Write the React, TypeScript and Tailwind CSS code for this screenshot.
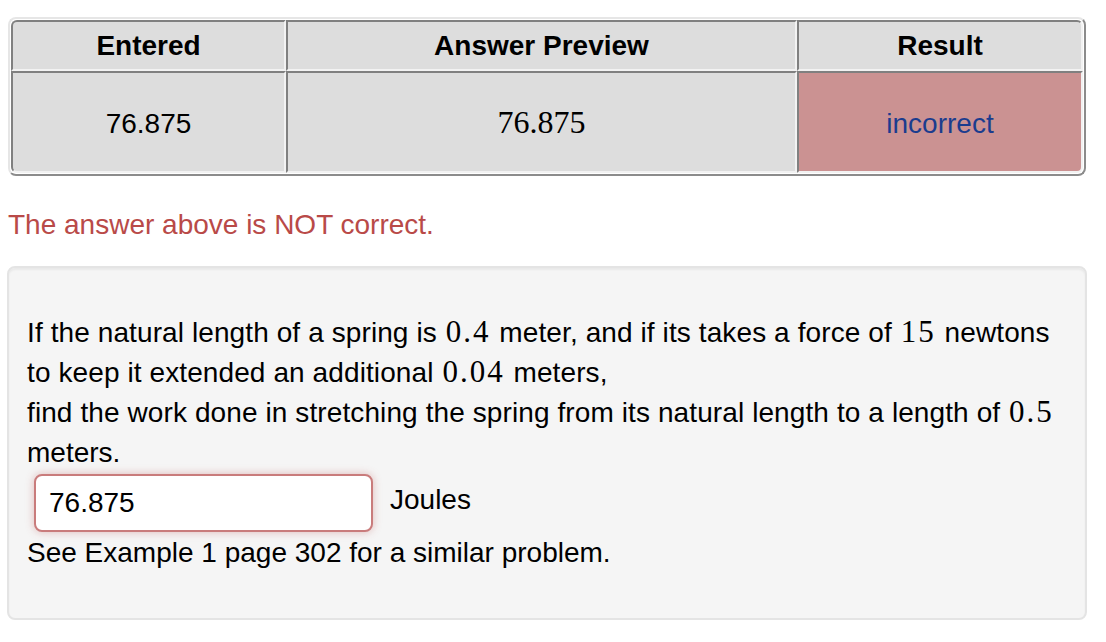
const sans = { fontFamily: '"Liberation Sans", Arial, Helvetica, sans-serif' }

function M({ children }: { children: string }) {
  return (
    <span className="mx-px font-['Liberation_Serif',serif] text-[31px] leading-none tracking-[2px]">{children}</span>
  )
}

const cellBase =
  'flex items-center justify-center border-2 border-t-[#808080] border-l-[#808080] border-b-[#f2f2f2] border-r-[#f2f2f2]'

export default function App() {
  return (
    <div className="min-h-[642px] w-[1106px] bg-white text-black" style={sans}>
      {/* Results table */}
      <div className="pt-[17px] pl-[8px]">
        <div className="w-[1078px] rounded-[8px] border-2 border-t-[#e6e6e6] border-l-[#e6e6e6] border-b-[#8c8c8c] border-r-[#8c8c8c] p-px">
          <div className="grid grid-cols-[275px_511px_286px] grid-rows-[51px_102px]">
            <div className={`${cellBase} rounded-tl-[6px] bg-[#dddddd] text-[28px] font-bold`}>Entered</div>
            <div className={`${cellBase} bg-[#dddddd] text-[28px] font-bold`}>Answer Preview</div>
            <div className={`${cellBase} rounded-tr-[6px] bg-[#dddddd] text-[28px] font-bold`}>Result</div>
            <div className={`${cellBase} rounded-bl-[6px] bg-[#dddddd] pt-[3px] text-[28px]`}>76.875</div>
            <div className={`${cellBase} bg-[#dddddd] font-['Liberation_Serif',serif] text-[32px]`}>76.875</div>
            <div className={`${cellBase} rounded-br-[6px] bg-[#cb9292] pt-[3px] text-[28px] text-[#1b3c8e]`}>incorrect</div>
          </div>
        </div>
      </div>

      {/* Feedback */}
      <div className="mt-[29px] pl-[8px] text-[28px] leading-[40px] text-[#b94a48]">
        The answer above is NOT correct.
      </div>

      {/* Problem well */}
      <div className="mt-[21px] ml-[7px] w-[1080px] rounded-[8px] border-2 border-[#e4e4e4] bg-[#f5f5f5] pt-[45px] pb-[45px] pl-[18px] text-[28px] leading-[40px] shadow-[inset_0_2px_2px_rgba(0,0,0,0.05)]">
        <div className="whitespace-nowrap tracking-[0.1px]">
          If the natural length of a spring is <M>0.4</M> meter, and if its takes a force of <M>15</M> newtons
        </div>
        <div className="whitespace-nowrap tracking-[0.1px]">
          to keep it extended an additional <M>0.04</M> meters,
        </div>
        <div className="whitespace-nowrap tracking-[0.1px]">
          find the work done in stretching the spring from its natural length to a length of <M>0.5</M>
        </div>
        <div className="whitespace-nowrap">meters.</div>

        <div className="flex h-[60px] items-start">
          <input
            type="text"
            defaultValue="76.875"
            className="ml-[7px] mt-px h-[58px] w-[339px] rounded-[8px] border-2 border-[#c97c7c] bg-white pl-[13px] text-[28px] text-black shadow-[0_0_8px_rgba(185,74,72,0.35)] outline-none"
          />
          <span className="ml-[17px] mt-[7px] leading-[40px]">Joules</span>
        </div>

        <div className="whitespace-nowrap">See Example 1 page 302 for a similar problem.</div>
      </div>
    </div>
  )
}
